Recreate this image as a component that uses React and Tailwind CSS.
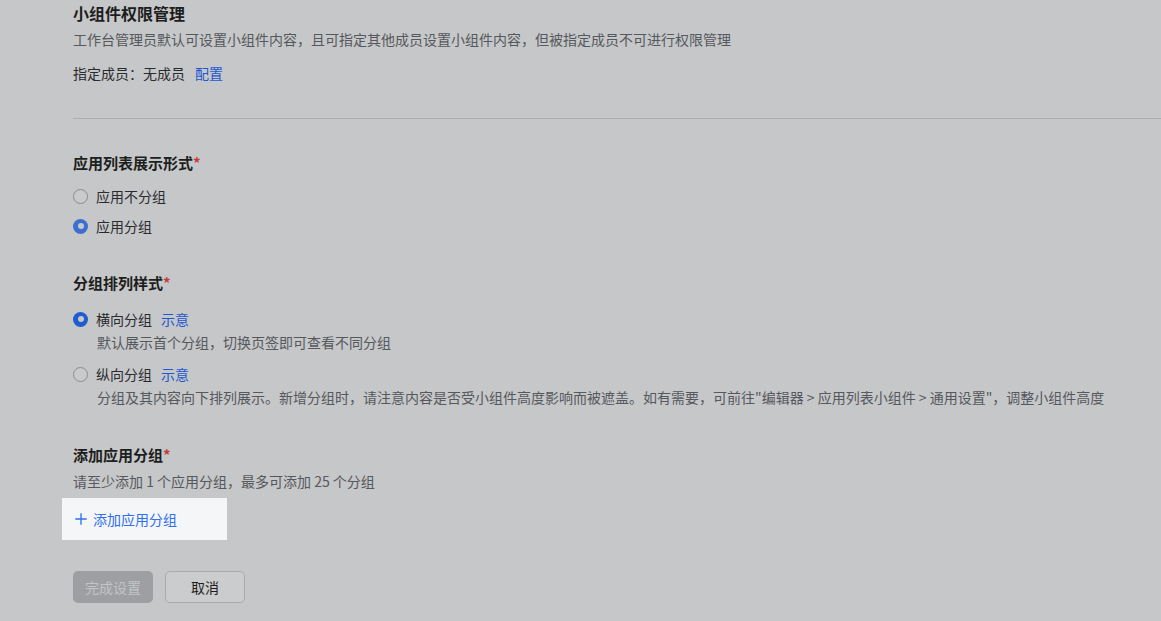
import React from 'react';
import { Plus } from 'lucide-react';

const font = { fontFamily: '"PingFang SC", "Noto Sans CJK SC", "Noto Sans", sans-serif' };

function Radio({ checked, soft }) {
  if (!checked) {
    return <span className="w-[15px] h-[15px] rounded-full border border-[#8a8c90] bg-[#c9cacc] shrink-0" />;
  }
  return (
    <span
      className={`w-[15px] h-[15px] rounded-full flex items-center justify-center shrink-0 ${soft ? 'bg-[#3d6fd0]' : 'bg-[#1f5ccf]'}`}
    >
      <span className="w-[6px] h-[6px] rounded-full bg-[#c7c8ca]" />
    </span>
  );
}

function Label({ children }) {
  return (
    <p className="text-[15px] font-semibold text-[#1d1e20] leading-[22px]">
      {children}
      <span className="text-[#c73a36]">*</span>
    </p>
  );
}

export default function App() {
  return (
    <div className="min-h-screen w-full bg-[#c6c7c9] overflow-hidden" style={font}>
      <div className="pl-[73px]">
        {/* widget permission */}
        <div className="pt-[1px]">
          <p className="text-[16px] font-semibold text-[#1d1e20] leading-[24px]">小组件权限管理</p>
          <p className="mt-[3px] text-[14px] text-[#55585c] leading-[22px]">
            工作台管理员默认可设置小组件内容，且可指定其他成员设置小组件内容，但被指定成员不可进行权限管理
          </p>
          <p className="mt-[12px] text-[14px] text-[#2a2b2e] leading-[22px]">
            指定成员：无成员<span className="ml-[10px] text-[#2158cf]">配置</span>
          </p>
        </div>

        <div className="mt-[34px] h-px bg-[#acadb0]" />

        {/* list display */}
        <div className="mt-[33px]">
          <Label>应用列表展示形式</Label>
          <div className="mt-[11px] flex flex-col gap-[8px]">
            <label className="flex items-center gap-[8px] h-[22px] text-[14px] text-[#2a2b2e]">
              <Radio />
              应用不分组
            </label>
            <label className="flex items-center gap-[8px] h-[22px] text-[14px] text-[#2a2b2e]">
              <Radio checked soft />
              应用分组
            </label>
          </div>
        </div>

        {/* group style */}
        <div className="mt-[35px]">
          <Label>分组排列样式</Label>
          <div className="mt-[14px]">
            <label className="flex items-center gap-[8px] h-[22px] text-[14px] text-[#2a2b2e]">
              <Radio checked />
              横向分组<span className="ml-[1px] text-[#2158cf]">示意</span>
            </label>
            <p className="pl-[24px] mt-[1px] text-[14px] text-[#55585c] leading-[22px]">
              默认展示首个分组，切换页签即可查看不同分组
            </p>
            <label className="mt-[10px] flex items-center gap-[8px] h-[22px] text-[14px] text-[#2a2b2e]">
              <Radio />
              纵向分组<span className="ml-[1px] text-[#2158cf]">示意</span>
            </label>
            <p className="pl-[24px] mt-[1px] text-[14px] text-[#55585c] leading-[22px] whitespace-nowrap">
              分组及其内容向下排列展示。新增分组时，请注意内容是否受小组件高度影响而被遮盖。如有需要，可前往"编辑器 &gt; 应用列表小组件 &gt; 通用设置"，调整小组件高度
            </p>
          </div>
        </div>

        {/* add group */}
        <div className="mt-[36px]">
          <Label>添加应用分组</Label>
          <p className="mt-[4px] text-[14px] text-[#55585c] leading-[22px]">
            请至少添加 1 个应用分组，最多可添加 25 个分组
          </p>
          <div className="-ml-[11px] mt-[6px] w-[165px] h-[42px] bg-[#f5f6f8] flex items-center pl-[10px] gap-[3px] text-[14px] text-[#2f6ff0]">
            <Plus size={18} strokeWidth={1.8} />
            添加应用分组
          </div>
        </div>

        {/* actions */}
        <div className="mt-[31px] flex gap-[12px]">
          <button className="w-[80px] h-[32px] rounded-[5px] bg-[#9d9fa2] text-[14px] text-[#c3c4c6]">完成设置</button>
          <button className="w-[80px] h-[32px] rounded-[5px] border border-[#a9aaad] bg-[#cbcccd] text-[14px] text-[#1d1e20]">取消</button>
        </div>
      </div>
    </div>
  );
}
